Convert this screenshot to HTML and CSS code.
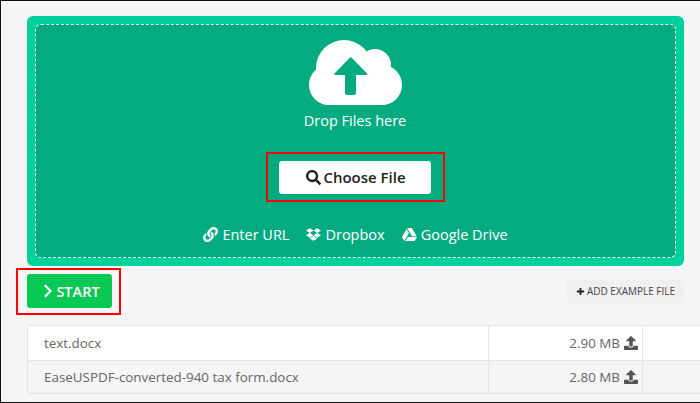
FILE: index.html
```html
<!DOCTYPE html>
<html lang="en">
<head>
<meta charset="utf-8">
<title>Upload</title>
<link rel="stylesheet" href="styles.css">
</head>
<body>
<main class="page">
  <section class="dropzone">
    <div class="dashed">
      <svg class="cloud" viewBox="0 0 94 66" aria-hidden="true">
        <circle class="cloud-fill" cx="35" cy="28" r="28"/>
        <circle class="cloud-fill" cx="66" cy="25" r="16"/>
        <circle class="cloud-fill" cx="20" cy="45" r="20"/>
        <circle class="cloud-fill" cx="73" cy="45" r="20"/>
        <rect class="cloud-fill" x="20" y="30" width="53" height="35"/>
        <path class="cloud-arrow" d="M41 17.500 L25.500 33.500 Q24.500 35 26.500 35 L36 35 L36 53 Q36 55 38 55 L45 55 Q47 55 47 53 L47 35 L57 35 Q59 35 58 33.500 L42.500 17.500 Q41.700 16.800 41 17.500 Z"/>
      </svg>
      <p class="drop-text">Drop Files here</p>
      <button class="choose annotated" type="button">
        <svg class="icon-search" viewBox="0 0 512 512" aria-hidden="true"><path d="M505 442.7L405.3 343c-4.500-4.500-10.600-7-17-7H372c27.600-35.300 44-79.700 44-128C416 93.100 322.900 0 208 0S0 93.100 0 208s93.100 208 208 208c48.300 0 92.700-16.400 128-44v16.300c0 6.400 2.500 12.500 7 17l99.700 99.700c9.400 9.400 24.600 9.400 33.900 0l28.300-28.300c9.400-9.400 9.400-24.600.1-34zM208 336c-70.700 0-128-57.200-128-128 0-70.700 57.200-128 128-128 70.700 0 128 57.200 128 128 0 70.700-57.200 128-128 128z"/></svg>
        Choose File
      </button>
      <nav class="sources">
        <a class="source"><svg class="icon" viewBox="0 0 512 512" aria-hidden="true"><path d="M326.612 185.391c59.747 59.809 58.927 155.698.36 214.590-.11.12-.24.25-.36.37l-67.200 67.200c-59.270 59.270-155.699 59.262-214.960 0-59.270-59.260-59.270-155.700 0-214.960l37.106-37.106c9.840-9.840 26.786-3.300 27.294 10.606.648 17.722 3.826 35.527 9.690 52.721 1.986 5.822.567 12.262-3.783 16.612l-13.087 13.087c-28.026 28.026-28.905 73.660-1.155 101.960 28.024 28.579 74.086 28.749 102.325.51l67.200-67.190c28.191-28.191 28.073-73.757 0-101.830-3.701-3.694-7.429-6.564-10.341-8.569a16.037 16.037 0 0 1-6.947-12.606c-.396-10.567 3.348-21.456 11.698-29.806l21.054-21.055c5.521-5.521 14.182-6.199 20.584-1.731a152.482 152.482 0 0 1 20.522 17.197zM467.547 44.449c-59.261-59.262-155.690-59.270-214.960 0l-67.200 67.200c-.12.12-.25.25-.36.37-58.566 58.892-59.387 154.781.36 214.590a152.454 152.454 0 0 0 20.521 17.196c6.402 4.468 15.064 3.789 20.584-1.731l21.054-21.055c8.350-8.350 12.094-19.239 11.698-29.806a16.037 16.037 0 0 0-6.947-12.606c-2.912-2.005-6.640-4.875-10.341-8.569-28.073-28.073-28.191-73.639 0-101.830l67.200-67.190c28.239-28.239 74.300-28.069 102.325.51 27.750 28.300 26.872 73.934-1.155 101.960l-13.087 13.087c-4.350 4.350-5.769 10.790-3.783 16.612 5.864 17.194 9.042 34.999 9.690 52.721.509 13.906 17.454 20.446 27.294 10.606l37.106-37.106c59.271-59.259 59.271-155.699.001-214.959z"/></svg>Enter URL</a>
        <a class="source"><svg class="icon" viewBox="0 0 528 512" aria-hidden="true"><path d="M264.400 116.300l-132 84.300 132 84.300-132 84.300L0 284.100l132.300-84.300L0 116.300 132.300 32l132.100 84.300zM131.600 395.700l132-84.300 132 84.300-132 84.300-132-84.300zm132.800-111.600l132-84.300-132-83.600L395.700 32 528 116.300l-132.300 84.300L528 284.800l-132.300 84.300-131.300-85z"/></svg>Dropbox</a>
        <a class="source"><svg class="icon" viewBox="0 0 512 512" aria-hidden="true"><path d="M339 314.900L175.400 32h161.200l163.600 282.900H339zm-137.500 23.600L120.900 480h310.500L512 338.500H201.500zM154.100 67.400L0 338.500 80.600 480 237 208.800 154.100 67.400z"/></svg>Google Drive</a>
      </nav>
    </div>
  </section>

  <div class="actions">
    <button class="start annotated" type="button">
      <svg class="icon-chevron" viewBox="0 0 10 16" aria-hidden="true"><path d="M2 1.500l6.500 6.500-6.500 6.500"/></svg>
      START
    </button>
    <button class="example" type="button">
      <svg class="icon-plus" viewBox="0 0 10 10" aria-hidden="true"><path d="M5 1v8M1 5h8"/></svg>
      ADD EXAMPLE FILE
    </button>
  </div>

  <div class="files">
    <div class="file">
      <span class="file-name">text.docx</span>
      <span class="file-size">2.90 MB
        <svg class="icon-upload" viewBox="0 0 512 512" aria-hidden="true"><path d="M296 384h-80c-13.300 0-24-10.700-24-24V192h-87.700c-17.800 0-26.700-21.500-14.100-34.100L242.300 5.700c7.500-7.500 19.800-7.500 27.300 0l152.200 152.200c12.600 12.600 3.700 34.100-14.100 34.100H320v168c0 13.300-10.700 24-24 24zm216-8v112c0 13.300-10.700 24-24 24H24c-13.300 0-24-10.700-24-24V376c0-13.300 10.700-24 24-24h136v8c0 30.900 25.100 56 56 56h80c30.900 0 56-25.100 56-56v-8h136c13.300 0 24 10.700 24 24z"/></svg>
      </span>
      <span class="file-extra"></span>
    </div>
    <div class="file file-alt">
      <span class="file-name">EaseUSPDF-converted-940 tax form.docx</span>
      <span class="file-size">2.80 MB
        <svg class="icon-upload" viewBox="0 0 512 512" aria-hidden="true"><path d="M296 384h-80c-13.300 0-24-10.700-24-24V192h-87.700c-17.800 0-26.700-21.500-14.100-34.100L242.300 5.700c7.500-7.500 19.800-7.500 27.300 0l152.200 152.200c12.600 12.600 3.700 34.100-14.100 34.100H320v168c0 13.300-10.700 24-24 24zm216-8v112c0 13.300-10.700 24-24 24H24c-13.300 0-24-10.700-24-24V376c0-13.300 10.700-24 24-24h136v8c0 30.900 25.100 56 56 56h80c30.900 0 56-25.100 56-56v-8h136c13.300 0 24 10.700 24 24z"/></svg>
      </span>
      <span class="file-extra"></span>
    </div>
  </div>
</main>
</body>
</html>
```
FILE: styles.css
```css
* { box-sizing: border-box; }
html, body { margin: 0; height: 100%; overflow: hidden; }
body { font-family: "Open Sans", "Liberation Sans", sans-serif; background: #f5f5f5; }
p { margin: 0; }
button { font-family: inherit; border: 0; cursor: pointer; }

.page {
  height: 403px;
  padding: 15px 16px 0 26px;
  border-top: 1px solid #111;
  border-left: 1px solid #111;
  border-bottom: 1px solid #111;
  overflow: hidden;
}

.dropzone {
  height: 250px;
  padding: 8px;
  background: #00d09c;
  border-radius: 6px;
}
.dashed {
  height: 234px;
  display: flex;
  flex-direction: column;
  align-items: center;
  padding-top: 15px;
  background: #05ab80;
  border: 1px dashed #fff;
  border-radius: 6px;
}
.cloud { width: 94px; height: 66px; display: block; }
.cloud-fill { fill: #fff; }
.cloud-arrow { fill: #05ab80; }
.drop-text { margin-top: 5px; margin-right: 1px; font-size: 14.500px; line-height: 20px; color: #fff; }

.annotated { position: relative; }
.annotated::after {
  content: "";
  position: absolute;
  border: 2px solid #f00;
  pointer-events: none;
}
.choose {
  margin-top: 30px;
  margin-right: 1px;
  width: 152px;
  height: 33px;
  padding: 0 0 1px 2px;
  display: flex;
  align-items: center;
  justify-content: center;
  gap: 2px;
  background: #fff;
  border-radius: 3px;
  color: #222;
  font-size: 15px;
  font-weight: 600;
}
.choose::after { inset: -9px -14px -8px -13px; }
.icon-search { width: 15px; height: 15px; fill: #222; }

.sources { display: flex; gap: 17px; margin-top: 30px; }
.source { display: flex; align-items: center; gap: 4px; font-size: 14.500px; line-height: 21px; color: #fff; }
.icon { width: 15px; height: 15px; fill: #fff; }

.actions {
  display: flex;
  justify-content: space-between;
  align-items: center;
  height: 34px;
  margin-top: 8px;
}
.start {
  width: 85px;
  height: 34px;
  padding: 0 0 0 4px;
  display: flex;
  align-items: center;
  justify-content: center;
  gap: 4px;
  background: #09c854;
  border-radius: 3px;
  color: #fff;
  font-size: 14.500px;
  font-weight: 600;
}
.start::after { inset: -6px -9px -7px -11px; }
.icon-chevron { width: 9px; height: 14px; fill: none; stroke: #fff; stroke-width: 2.500; }
.example {
  width: 117px;
  height: 25px;
  display: flex;
  align-items: center;
  justify-content: center;
  gap: 2px;
  background: #f0f0f0;
  border-radius: 3px;
  color: #444;
  font-size: 10px;
  font-weight: 400;
  white-space: nowrap;
}
.icon-plus { width: 9px; height: 9px; stroke: #222; stroke-width: 2; fill: none; }

.files {
  margin-top: 17px;
  margin-right: -16px;
  border: 1px solid #e4e4e4;
  border-right: 0;
  border-radius: 3px 0 0 3px;
}
.file { display: grid; grid-template-columns: 460px 154px 1fr; height: 34px; background: #fff; color: #666; font-size: 13.400px; }
.file-alt { height: 33px; background: #f5f5f5; border-top: 1px solid #e6e6e6; }
.file-name { padding-left: 16px; align-self: center; }
.file-size {
  display: flex;
  align-items: center;
  justify-content: flex-end;
  gap: 4px;
  padding-right: 4px;
  border-left: 1px solid #e6e6e6;
}
.file-extra { border-left: 1px solid #e6e6e6; }
.icon-upload { width: 14px; height: 14px; fill: #555; }
```
